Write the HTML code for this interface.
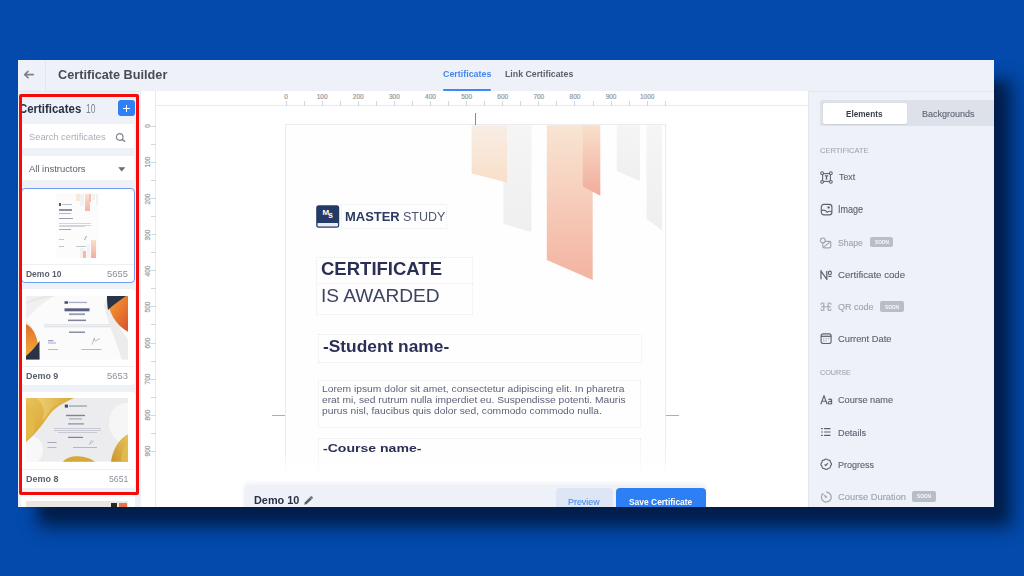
<!DOCTYPE html>
<html><head><meta charset="utf-8">
<style>
*{margin:0;padding:0;box-sizing:border-box}
html,body{width:1024px;height:576px;overflow:hidden}
body{background:#034aac;font-family:"Liberation Sans",sans-serif;position:relative}
.a{position:absolute}
.t{white-space:nowrap;transform-origin:0 0}
.full{left:0;top:0;width:1024px;height:576px}
.rn{font-size:6.5px;color:#959aa3;-webkit-text-stroke:0.2px currentColor;white-space:nowrap;line-height:8px;text-align:center;width:24px}
.rv{transform:rotate(-90deg)}
.tk{top:101.3px;width:1px;height:4.3px;background:#d3d6dc}
.tkv{left:151.3px;width:4.3px;height:1px;background:#d3d6dc}
.dash{border:1px dotted #e9eaee}
.md{-webkit-text-stroke:0.25px currentColor}
.soon{border-radius:2px;background:#b9bdc6}
</style></head><body>
<div class="a" style="left:38px;top:80px;width:974px;height:447px;background:#01204f;filter:blur(9px)"></div>
<div class="a" style="left:40px;top:84px;width:962px;height:434px;background:#011a45;filter:blur(5px);opacity:.45"></div>
<div class="a" style="left:18px;top:60px;width:976px;height:447px;background:#eef1f8"></div>

<div class="a" style="left:18px;top:90.5px;width:976px;height:1px;background:#e3e6ee"></div>
<svg class="a" style="left:22px;top:69px" width="14" height="12" viewBox="0 0 14 12"><path d="M11.3 5.6H3M6 2.4L2.7 5.6L6 8.8" stroke="#7b8089" stroke-width="1.6" fill="none" stroke-linecap="round" stroke-linejoin="round"/></svg>
<div class="a" style="left:44.7px;top:60px;width:1px;height:30.5px;background:#e3e6ee"></div>
<div class="a t" style="left:57.80px;top:67.93px;font-size:12.28px;line-height:14.73px;font-weight:bold;color:#474c57;transform:scaleX(1.035);">Certificate Builder</div>
<div class="a t" style="left:442.60px;top:69.22px;font-size:8.69px;line-height:10.43px;font-weight:bold;color:#3f87f2;transform:scaleX(1.025);">Certificates</div>
<div class="a t" style="left:504.60px;top:69.22px;font-size:8.69px;line-height:10.43px;font-weight:bold;color:#5a5f6a;transform:scaleX(1.012);">Link Certificates</div>
<div class="a" style="left:442.6px;top:88.8px;width:48.5px;height:2px;background:#3f87f2;border-radius:1px"></div>
<div class="a full" style="clip-path:inset(91px 884px 69px 18px)">
<div class="a" style="left:139.5px;top:91px;width:1.5px;height:416px;background:#e3e6ee"></div>
<div class="a t" style="left:19.30px;top:100.51px;font-size:13.04px;line-height:15.64px;font-weight:bold;color:#273044;transform:scaleX(0.877);">Certificates</div>
<div class="a t" style="left:86.30px;top:100.51px;font-size:13.04px;line-height:15.64px;font-weight:normal;color:#7d8290;transform:scaleX(0.652);">10</div>
<div class="a" style="left:118.2px;top:100.2px;width:16.5px;height:16.3px;border-radius:3px;background:#2f80f5"></div>
<div class="a" style="left:122.7px;top:107.6px;width:7.5px;height:1.6px;background:#fff"></div>
<div class="a" style="left:125.65px;top:104.6px;width:1.6px;height:7.5px;background:#fff"></div>
<div class="a" style="left:22px;top:124px;width:112px;height:23.5px;background:#fff;border-radius:2px"></div>
<div class="a t" style="left:29.40px;top:131.87px;font-size:9.38px;line-height:11.26px;font-weight:normal;color:#a9aeb8;transform:scaleX(0.993);">Search certificates</div>
<svg class="a" style="left:115px;top:133px" width="11" height="9" viewBox="0 0 11 9" overflow="visible"><circle cx="4.7" cy="4" r="3.3" stroke="#7f8590" stroke-width="1.2" fill="none"/><path d="M7.3 6.6L9.8 8.4" stroke="#7f8590" stroke-width="1.3" stroke-linecap="round"/></svg>
<div class="a" style="left:22px;top:155.8px;width:112px;height:24.7px;background:#fff;border-radius:2px"></div>
<div class="a t" style="left:29.40px;top:164.06px;font-size:8.55px;line-height:10.26px;font-weight:normal;color:#5b606b;transform:scaleX(1.103);">All instructors</div>
<svg class="a" style="left:117.5px;top:166.6px" width="8" height="5" viewBox="0 0 8 5"><path d="M0.2 0.2H7.3L3.75 4.4Z" fill="#676c76"/></svg>
<div class="a" style="left:20.5px;top:187.8px;width:114px;height:95.4px;background:#fff;border-radius:4px;border:1px solid #6c9ef2;"></div>
<div class="a" style="left:21.5px;top:264px;width:112px;height:1px;background:#eef0f4"></div>
<div class="a t" style="left:25.90px;top:269.05px;font-size:8.45px;line-height:10.14px;font-weight:bold;color:#5a5f6b;transform:scaleX(1.005);">Demo 10</div>
<div class="a t" style="left:106.70px;top:269.05px;font-size:8.45px;line-height:10.14px;font-weight:normal;color:#8b909a;transform:scaleX(1.111);">5655</div>
<div class="a" style="left:20.5px;top:289.2px;width:114px;height:96.3px;background:#fff;border-radius:4px;"></div>
<div class="a" style="left:21.5px;top:366.3px;width:112px;height:1px;background:#eef0f4"></div>
<div class="a t" style="left:25.90px;top:371.05px;font-size:8.45px;line-height:10.14px;font-weight:bold;color:#5a5f6b;transform:scaleX(1.061);">Demo 9</div>
<div class="a t" style="left:106.70px;top:371.05px;font-size:8.45px;line-height:10.14px;font-weight:normal;color:#8b909a;transform:scaleX(1.111);">5653</div>
<div class="a" style="left:20.5px;top:391.7px;width:114px;height:96px;background:#fff;border-radius:4px;"></div>
<div class="a" style="left:21.5px;top:469.2px;width:112px;height:1px;background:#eef0f4"></div>
<div class="a t" style="left:25.90px;top:473.51px;font-size:8.60px;line-height:10.32px;font-weight:bold;color:#5a5f6b;transform:scaleX(1.044);">Demo 8</div>
<div class="a t" style="left:108.90px;top:473.51px;font-size:8.60px;line-height:10.32px;font-weight:normal;color:#8b909a;transform:scaleX(1.009);">5651</div>
<div class="a" style="left:20.5px;top:494px;width:114px;height:96px;background:#fff;border-radius:4px"></div>
<div class="a" style="left:55.8px;top:193px;width:43.5px;height:65px;background:#fcfcfd;overflow:hidden;filter:blur(0.35px)">
<div class="a" style="left:20.5px;top:1px;width:4px;height:6.5px;background:#f8e9dc"></div>
<div class="a" style="left:24.5px;top:1px;width:3.5px;height:12px;background:#f3f3f3"></div>
<div class="a" style="left:29px;top:1px;width:5px;height:16.5px;background:linear-gradient(#f9e2cf,#f3b3a2)"></div>
<div class="a" style="left:33px;top:1px;width:2px;height:8px;background:#f4bfae"></div>
<div class="a" style="left:36.5px;top:1px;width:2.5px;height:6px;background:#f2f2f2"></div>
<div class="a" style="left:40px;top:1px;width:1.8px;height:11px;background:#f2f2f2"></div>
<div class="a" style="left:3px;top:10.2px;width:2.6px;height:2.4px;background:#4a5575"></div>
<div class="a" style="left:6.2px;top:10.8px;width:10.5px;height:1.2px;background:#b9bdcc"></div>
<div class="a" style="left:3px;top:16.2px;width:13.5px;height:1.5px;background:#8d91a6"></div>
<div class="a" style="left:3px;top:19.6px;width:12.5px;height:1px;background:#b4b7c4"></div>
<div class="a" style="left:3px;top:25px;width:14px;height:1.4px;background:#9a9eb0"></div>
<div class="a" style="left:3px;top:30px;width:32px;height:0.9px;background:#d3d5dd"></div>
<div class="a" style="left:3px;top:31.6px;width:32px;height:0.9px;background:#d3d5dd"></div>
<div class="a" style="left:3px;top:33.2px;width:26px;height:0.9px;background:#d3d5dd"></div>
<div class="a" style="left:3px;top:36.3px;width:12px;height:1.2px;background:#a5a9b8"></div>
<div class="a" style="left:3px;top:45.5px;width:5.5px;height:1px;background:#c2c5d0"></div>
<div class="a" style="left:29.5px;top:42.5px;width:4px;height:4px;border-left:1px solid #a0a4b0;transform:skewX(-25deg)"></div>
<div class="a" style="left:3px;top:52.5px;width:5px;height:1px;background:#c2c5d0"></div>
<div class="a" style="left:20px;top:52.5px;width:10px;height:1px;background:#c2c5d0"></div>
<div class="a" style="left:24px;top:55px;width:4px;height:10px;background:#f5f2ee"></div>
<div class="a" style="left:27px;top:58px;width:3.5px;height:7px;background:#f4b9a6"></div>
<div class="a" style="left:31px;top:51px;width:3px;height:14px;background:#f3f3f3"></div>
<div class="a" style="left:35px;top:47px;width:5px;height:18px;background:linear-gradient(#f9dfcb,#f2ae9c)"></div>
</div>
<svg class="a" style="left:25.8px;top:296.4px;filter:blur(0.3px)" width="102.7" height="63.5" viewBox="0 0 102.7 63.5">
<defs>
<linearGradient id="o1" x1="0" y1="0" x2="1" y2="1"><stop offset="0" stop-color="#f4a43a"/><stop offset="0.5" stop-color="#e87a2e"/><stop offset="1" stop-color="#d8502e"/></linearGradient>
<linearGradient id="o2" x1="0" y1="0" x2="0" y2="1"><stop offset="0" stop-color="#e0702c"/><stop offset="1" stop-color="#f4b23a"/></linearGradient>
<radialGradient id="gw" cx="0.2" cy="0.3" r="0.8"><stop offset="0.5" stop-color="#ffffff"/><stop offset="0.8" stop-color="#eeeeee"/><stop offset="1" stop-color="#f7f7f7"/></radialGradient>
</defs>
<rect width="102.7" height="63.5" fill="#fbfbfb"/>
<path d="M0 0H28C18 6 8 14 0 24Z" fill="#f0f0f0"/>
<path d="M0 8C10 4 20 2 30 0H18C10 2 4 4 0 6Z" fill="#e8e8e8"/>
<path d="M0 24C6 30 12 40 14 63.5H0Z" fill="#ececec"/>
<path d="M0 28C9 32 13.5 46 13.5 63.5H0Z" fill="url(#o2)"/>
<path d="M0 63.5H13.5V45C10 50 5 56 0 60Z" fill="#2b3346"/>
<path d="M81 0C84 12 92 30 102.7 45V63.5H96C90 46 82 26 78 10Z" fill="#ececec"/>
<path d="M81 0H102.7V36C90 30 82 16 81 0Z" fill="url(#o1)"/>
<path d="M81 0H100C94 4 87 9 82 14C81.3 9 81 4 81 0Z" fill="#2b3346"/>
<rect x="38.5" y="5.3" width="3.6" height="2.4" fill="#3f4a6a"/>
<rect x="43" y="5.8" width="18" height="1.3" fill="#a6abbd"/>
<rect x="38.5" y="12.3" width="25" height="3" fill="#5a6180"/>
<rect x="43" y="17.3" width="16" height="1.8" fill="#979cb2"/>
<rect x="42" y="23.6" width="18" height="1.5" fill="#7d8399"/>
<rect x="18" y="28.5" width="66" height="0.8" fill="#d2d4dc"/>
<rect x="18" y="30.4" width="66" height="0.8" fill="#d2d4dc"/>
<rect x="43" y="35.5" width="16" height="1.5" fill="#8a8fa4"/>
<rect x="22" y="44.4" width="5.5" height="0.8" fill="#5565a8"/>
<rect x="22" y="46.5" width="8" height="1" fill="#a6aabb"/>
<rect x="22" y="53" width="10" height="1" fill="#b8bcc8"/>
<rect x="55.5" y="53" width="20" height="1" fill="#b8bcc8"/>
<path d="M66 48.5C67 46 68 43 68.5 42C68 45 69 46 71 44L74 42.5" stroke="#8a8f9b" stroke-width="0.6" fill="none"/>
</svg>
<svg class="a" style="left:25.8px;top:398.4px;filter:blur(0.3px)" width="102.7" height="63.7" viewBox="0 0 102.7 63.7">
<defs>
<linearGradient id="y1" x1="0" y1="0" x2="1" y2="1"><stop offset="0" stop-color="#e9c25a"/><stop offset="0.6" stop-color="#d7a836"/><stop offset="1" stop-color="#c9982c"/></linearGradient>
<linearGradient id="y2" x1="0" y1="0" x2="1" y2="0"><stop offset="0" stop-color="#f0d27a"/><stop offset="1" stop-color="#d9aa3a"/></linearGradient>
<linearGradient id="y3" x1="1" y1="0" x2="0" y2="1"><stop offset="0" stop-color="#e8c45e"/><stop offset="1" stop-color="#c8962a"/></linearGradient>
</defs>
<rect width="102.7" height="63.7" fill="#ececee"/>
<ellipse cx="100" cy="25" rx="17" ry="20" fill="#f6f6f7"/>
<ellipse cx="4" cy="52" rx="13" ry="14" fill="#f8f8f9"/>
<path d="M0 0H48C40 4 30 8 24 16C18 24 12 34 0 44Z" fill="url(#y1)"/>
<path d="M10 0H46C38 3 30 6 26 10C22 14 20 20 16 22C20 14 18 6 10 0Z" fill="url(#y2)" opacity="0.85"/>
<path d="M0 6C6 12 10 20 9 30C8 36 4 40 0 42Z" fill="#e3b949"/>
<path d="M102.7 36C94 40 87 50 85 63.7H102.7Z" fill="url(#y3)"/>
<path d="M102.7 44C98 48 95 56 95 63.7H102.7Z" fill="#e4bd55" opacity="0.8"/>
<path d="M37 63.7C40 59 50 57 58 59C63 60 67 62 69 63.7Z" fill="#d6a838"/>
<rect x="38.8" y="6.6" width="3.2" height="3" fill="#3f4a6a"/>
<rect x="43" y="7.4" width="18" height="1.3" fill="#9aa0b4"/>
<rect x="40" y="16.8" width="19" height="1.4" fill="#7d8399"/>
<rect x="43" y="20.4" width="13" height="1" fill="#9aa0b0"/>
<rect x="42" y="25.3" width="16" height="1.2" fill="#868ca2"/>
<rect x="28" y="30" width="47" height="0.8" fill="#bfc2cc"/>
<rect x="28" y="32" width="47" height="0.8" fill="#bfc2cc"/>
<rect x="32" y="34" width="39" height="0.8" fill="#bfc2cc"/>
<rect x="42" y="38.8" width="15" height="1.2" fill="#7d8399"/>
<rect x="21.5" y="44" width="9" height="0.9" fill="#9aa0b4"/>
<rect x="21.5" y="49" width="9" height="0.9" fill="#aeb2be"/>
<rect x="47" y="49" width="24" height="0.9" fill="#aeb2be"/>
<path d="M63 47L66 42M64 46L68 43" stroke="#8ea2d6" stroke-width="0.6"/>
</svg>
<div class="a" style="left:25.5px;top:501px;width:102.7px;height:64px;background:#ebe7e3;overflow:hidden">
<div class="a" style="left:85px;top:1.5px;width:6.5px;height:6px;background:#2a2624"></div>
<div class="a" style="left:93px;top:1.5px;width:8.5px;height:6px;background:#e8734a"></div>
</div>
</div>
<div class="a" style="left:18.6px;top:94.4px;width:120.4px;height:400.6px;border:3.1px solid #f50a0a;border-radius:2px"></div>
<div class="a full" style="clip-path:inset(91px 215.5px 69px 141px)">
<div class="a" style="left:141px;top:91px;width:668px;height:416px;background:#fff"></div>
<div class="a" style="left:285.2px;top:124.3px;width:381px;height:400px;background:#fefefe;border:1px solid #ebebf0"></div>
<svg class="a" style="left:0;top:0" width="1024" height="576">
<defs>
<linearGradient id="g1" x1="0" y1="0" x2="0" y2="1"><stop offset="0" stop-color="#f8eee5"/><stop offset="1" stop-color="#f8dfc9"/></linearGradient>
<linearGradient id="gg" x1="0" y1="0" x2="0" y2="1"><stop offset="0" stop-color="#f5f5f5"/><stop offset="1" stop-color="#efefef"/></linearGradient>
<linearGradient id="g3" x1="0" y1="0" x2="0" y2="1"><stop offset="0" stop-color="#f8e5d2"/><stop offset="1" stop-color="#f4b3a1"/></linearGradient>
<linearGradient id="g4" x1="0" y1="0" x2="0" y2="1"><stop offset="0" stop-color="#f8e0cc"/><stop offset="1" stop-color="#f2ab9a"/></linearGradient>
</defs>
<path d="M503.4 125.3H531.5V232L503.4 223.8Z" fill="url(#gg)"/>
<path d="M471.6 125.3H507V182.5L471.6 173.4Z" fill="url(#g1)"/>
<path d="M546.8 125.3H592.7V279.9L546.8 260Z" fill="url(#g3)"/>
<path d="M582.8 125.3H600.3V195.7L582.8 186.5Z" fill="url(#g4)"/>
<path d="M616.8 125.3H639.9V180.9L616.8 171Z" fill="url(#gg)"/>
<path d="M646.5 125.3H662V230.4L646.5 218.8Z" fill="url(#gg)"/>
</svg>
<div class="a" style="left:474.5px;top:112.5px;width:1.1px;height:12.5px;background:#858a93"></div>
<div class="a" style="left:666px;top:414.5px;width:13px;height:1.2px;background:#a9aebb"></div>
<div class="a" style="left:272px;top:414.5px;width:13px;height:1.2px;background:#a9aebb"></div>
<div class="a dash" style="left:340.5px;top:204px;width:106.5px;height:24.7px"></div>
<svg class="a" style="left:316px;top:205.3px" width="23.5" height="23" viewBox="0 0 23.5 23">
<rect x="0.2" y="0.2" width="23" height="22.6" rx="2.5" fill="#253b66"/>
<rect x="1.5" y="17.9" width="20.5" height="3.5" rx="0.8" fill="#e8ebf1"/>
<text x="6.6" y="10.2" font-family="Liberation Sans" font-weight="bold" font-size="7.2" fill="#fff" transform="translate(6.6 0) scale(1.12 1) translate(-6.6 0)">M</text>
<text x="12.2" y="12.7" font-family="Liberation Sans" font-weight="bold" font-size="8.4" fill="#fff">s</text>
</svg>
<div class="a t" style="left:344.90px;top:209.89px;font-size:12.32px;line-height:14.79px;font-weight:bold;color:#2a3a60;transform:scaleX(1.052);">MASTER</div>
<div class="a t" style="left:403.00px;top:209.89px;font-size:12.32px;line-height:14.79px;font-weight:normal;color:#4b5570;transform:scaleX(1.015);">STUDY</div>
<div class="a dash" style="left:315.8px;top:256.7px;width:157.2px;height:27px"></div>
<div class="a dash" style="left:315.8px;top:283.2px;width:157.2px;height:32px"></div>
<div class="a t" style="left:320.80px;top:259.33px;font-size:17.77px;line-height:21.32px;font-weight:bold;color:#2b2f55;transform:scaleX(1.042);">CERTIFICATE</div>
<div class="a t" style="left:321.40px;top:286.43px;font-size:17.77px;line-height:21.32px;font-weight:normal;color:#3d4463;transform:scaleX(1.076);">IS AWARDED</div>
<div class="a dash" style="left:317.6px;top:334.2px;width:324px;height:28.6px"></div>
<div class="a t" style="left:323.00px;top:337.00px;font-size:15.90px;line-height:19.08px;font-weight:bold;color:#2b2f55;transform:scaleX(1.091);">-Student name-</div>
<div class="a dash" style="left:317.6px;top:380.3px;width:323px;height:47.7px"></div>
<div class="a t" style="left:322.30px;top:382.93px;font-size:9.74px;line-height:11.69px;font-weight:normal;color:#5d6278;transform:scaleX(1.055);">Lorem ipsum dolor sit amet, consectetur adipiscing elit. In pharetra</div>
<div class="a t" style="left:322.30px;top:394.03px;font-size:9.74px;line-height:11.69px;font-weight:normal;color:#5d6278;transform:scaleX(1.051);">erat mi, sed rutrum nulla imperdiet eu. Suspendisse potenti. Mauris</div>
<div class="a t" style="left:322.30px;top:405.50px;font-size:9.24px;line-height:11.09px;font-weight:normal;color:#5d6278;transform:scaleX(1.108);">purus nisl, faucibus quis dolor sed, commodo commodo nulla.</div>
<div class="a dash" style="left:318.3px;top:437.9px;width:323px;height:40px"></div>
<div class="a t" style="left:322.70px;top:441.43px;font-size:11.75px;line-height:14.1px;font-weight:bold;color:#2b2f55;transform:scaleX(1.196);">-Course name-</div>
<div class="a" style="left:141px;top:452px;width:668px;height:55px;background:linear-gradient(rgba(255,255,255,0),#fff 40%)"></div>
<div class="a" style="left:141px;top:91px;width:668px;height:14.5px;background:#fff"></div>
<div class="a" style="left:141px;top:105.3px;width:668px;height:1px;background:#e8eaef"></div>
<div class="a" style="left:141px;top:91px;width:14.5px;height:416px;background:#fff"></div>
<div class="a" style="left:155px;top:91px;width:1px;height:416px;background:#e8eaef"></div>
<div class="a rn" style="left:274.00px;top:93.2px">0</div>
<div class="a tk" style="left:285.50px"></div>
<div class="a tk" style="left:303.56px"></div>
<div class="a rn" style="left:310.12px;top:93.2px">100</div>
<div class="a tk" style="left:321.62px"></div>
<div class="a tk" style="left:339.68px"></div>
<div class="a rn" style="left:346.24px;top:93.2px">200</div>
<div class="a tk" style="left:357.74px"></div>
<div class="a tk" style="left:375.80px"></div>
<div class="a rn" style="left:382.36px;top:93.2px">300</div>
<div class="a tk" style="left:393.86px"></div>
<div class="a tk" style="left:411.92px"></div>
<div class="a rn" style="left:418.48px;top:93.2px">400</div>
<div class="a tk" style="left:429.98px"></div>
<div class="a tk" style="left:448.04px"></div>
<div class="a rn" style="left:454.60px;top:93.2px">500</div>
<div class="a tk" style="left:466.10px"></div>
<div class="a tk" style="left:484.16px"></div>
<div class="a rn" style="left:490.72px;top:93.2px">600</div>
<div class="a tk" style="left:502.22px"></div>
<div class="a tk" style="left:520.28px"></div>
<div class="a rn" style="left:526.84px;top:93.2px">700</div>
<div class="a tk" style="left:538.34px"></div>
<div class="a tk" style="left:556.40px"></div>
<div class="a rn" style="left:562.96px;top:93.2px">800</div>
<div class="a tk" style="left:574.46px"></div>
<div class="a tk" style="left:592.52px"></div>
<div class="a rn" style="left:599.08px;top:93.2px">900</div>
<div class="a tk" style="left:610.58px"></div>
<div class="a tk" style="left:628.64px"></div>
<div class="a rn" style="left:635.20px;top:93.2px">1000</div>
<div class="a tk" style="left:646.70px"></div>
<div class="a tk" style="left:664.76px"></div>
<div class="a rn rv" style="left:136px;top:122.30px">0</div>
<div class="a tkv" style="top:125.80px"></div>
<div class="a tkv" style="top:143.86px"></div>
<div class="a rn rv" style="left:136px;top:158.42px">100</div>
<div class="a tkv" style="top:161.92px"></div>
<div class="a tkv" style="top:179.98px"></div>
<div class="a rn rv" style="left:136px;top:194.54px">200</div>
<div class="a tkv" style="top:198.04px"></div>
<div class="a tkv" style="top:216.10px"></div>
<div class="a rn rv" style="left:136px;top:230.66px">300</div>
<div class="a tkv" style="top:234.16px"></div>
<div class="a tkv" style="top:252.22px"></div>
<div class="a rn rv" style="left:136px;top:266.78px">400</div>
<div class="a tkv" style="top:270.28px"></div>
<div class="a tkv" style="top:288.34px"></div>
<div class="a rn rv" style="left:136px;top:302.90px">500</div>
<div class="a tkv" style="top:306.40px"></div>
<div class="a tkv" style="top:324.46px"></div>
<div class="a rn rv" style="left:136px;top:339.02px">600</div>
<div class="a tkv" style="top:342.52px"></div>
<div class="a tkv" style="top:360.58px"></div>
<div class="a rn rv" style="left:136px;top:375.14px">700</div>
<div class="a tkv" style="top:378.64px"></div>
<div class="a tkv" style="top:396.70px"></div>
<div class="a rn rv" style="left:136px;top:411.26px">800</div>
<div class="a tkv" style="top:414.76px"></div>
<div class="a tkv" style="top:432.82px"></div>
<div class="a rn rv" style="left:136px;top:447.38px">900</div>
<div class="a tkv" style="top:450.88px"></div>
<div class="a" style="left:244.4px;top:485px;width:462px;height:40px;background:#eef1f8;border-radius:5px;box-shadow:0 -2px 4px rgba(230,233,240,.6)"></div>
<div class="a t" style="left:253.80px;top:494.32px;font-size:11.34px;line-height:13.6px;font-weight:bold;color:#273044;transform:scaleX(0.959);">Demo 10</div>
<svg class="a" style="left:303px;top:495px" width="11" height="11" viewBox="0 0 11 11"><path d="M1.3 9.7L1.9 7.2L7.6 1.5Q8.3 0.9 9 1.5L9.5 2Q10.1 2.7 9.5 3.4L3.8 9.1Z" fill="#5b616c"/><path d="M6.9 2.3L8.7 4.1" stroke="#eef1f8" stroke-width="0.6"/></svg>
<div class="a" style="left:555.5px;top:488.2px;width:57.5px;height:30px;background:#dee5f4;border-radius:4px"></div>
<div class="a t" style="left:568.40px;top:495.57px;font-size:9.80px;line-height:11.76px;font-weight:normal;color:#4a8bef;transform:scaleX(0.906);-webkit-text-stroke:0.12px currentColor;">Preview</div>
<div class="a" style="left:616px;top:488px;width:89.5px;height:30px;background:#2e7ef4;border-radius:4px"></div>
<div class="a t" style="left:628.90px;top:495.76px;font-size:9.60px;line-height:11.52px;font-weight:bold;color:#ffffff;transform:scaleX(0.879);">Save Certificate</div>
</div>
<div class="a full" style="clip-path:inset(91px 30px 69px 808px)">
<div class="a" style="left:808.3px;top:91px;width:1px;height:416px;background:#e3e6ee"></div>
<div class="a" style="left:819.5px;top:100.2px;width:190px;height:26px;background:#dde1ea;border-radius:3px"></div>
<div class="a" style="left:822.5px;top:102.7px;width:84px;height:21px;background:#fff;border-radius:2.5px;box-shadow:0 0.5px 1px rgba(0,0,0,.08)"></div>
<div class="a t" style="left:846.30px;top:108.41px;font-size:9.45px;line-height:11.34px;font-weight:bold;color:#3a3f4a;transform:scaleX(0.869);">Elements</div>
<div class="a t" style="left:922.20px;top:108.41px;font-size:9.45px;line-height:11.34px;font-weight:normal;color:#5f6470;transform:scaleX(0.954);-webkit-text-stroke:0.12px currentColor;">Backgrounds</div>
<div class="a t" style="left:819.90px;top:145.96px;font-size:8.02px;line-height:9.63px;font-weight:normal;color:#a2a7b1;transform:scaleX(0.937);-webkit-text-stroke:0.12px currentColor;">CERTIFICATE</div>
<div class="a t" style="left:819.90px;top:367.76px;font-size:8.02px;line-height:9.63px;font-weight:normal;color:#a2a7b1;transform:scaleX(0.900);-webkit-text-stroke:0.12px currentColor;">COURSE</div>
<div class="a t" style="left:838.90px;top:172.35px;font-size:9.30px;line-height:11.16px;font-weight:normal;color:#5e6370;transform:scaleX(0.944);-webkit-text-stroke:0.12px currentColor;">Text</div>
<div class="a t" style="left:837.90px;top:204.40px;font-size:10.25px;line-height:12.3px;font-weight:normal;color:#5e6370;transform:scaleX(0.881);-webkit-text-stroke:0.12px currentColor;">Image</div>
<div class="a t" style="left:838.20px;top:237.68px;font-size:8.74px;line-height:10.49px;font-weight:normal;color:#9da2ac;transform:scaleX(0.981);-webkit-text-stroke:0.12px currentColor;">Shape</div>
<div class="a t" style="left:838.00px;top:268.96px;font-size:9.60px;line-height:11.52px;font-weight:normal;color:#5e6370;transform:scaleX(1.006);-webkit-text-stroke:0.12px currentColor;">Certificate code</div>
<div class="a t" style="left:838.00px;top:301.64px;font-size:9.31px;line-height:11.17px;font-weight:normal;color:#9da2ac;transform:scaleX(0.969);-webkit-text-stroke:0.12px currentColor;">QR code</div>
<div class="a t" style="left:838.00px;top:334.04px;font-size:9.31px;line-height:11.17px;font-weight:normal;color:#5e6370;transform:scaleX(1.005);-webkit-text-stroke:0.12px currentColor;">Current Date</div>
<div class="a t" style="left:837.90px;top:395.38px;font-size:8.74px;line-height:10.49px;font-weight:normal;color:#5e6370;transform:scaleX(1.050);-webkit-text-stroke:0.12px currentColor;">Course name</div>
<div class="a t" style="left:838.00px;top:426.64px;font-size:9.52px;line-height:11.42px;font-weight:normal;color:#5e6370;transform:scaleX(0.966);-webkit-text-stroke:0.12px currentColor;">Details</div>
<div class="a t" style="left:837.90px;top:459.07px;font-size:9.59px;line-height:11.51px;font-weight:normal;color:#5e6370;transform:scaleX(0.940);-webkit-text-stroke:0.12px currentColor;">Progress</div>
<div class="a t" style="left:838.10px;top:491.20px;font-size:9.46px;line-height:11.35px;font-weight:normal;color:#9da2ac;transform:scaleX(0.989);-webkit-text-stroke:0.12px currentColor;">Course Duration</div>
<div class="a soon" style="left:870.1px;top:237px;width:22.8px;height:10.2px"></div>
<div class="a t" style="left:874.50px;top:239.20px;font-size:5.44px;line-height:6.53px;font-weight:bold;color:#f7f8fa;transform:scaleX(0.873);">SOON</div>
<div class="a soon" style="left:880.3px;top:301.4px;width:23.4px;height:10.2px"></div>
<div class="a t" style="left:885.00px;top:303.60px;font-size:5.44px;line-height:6.53px;font-weight:bold;color:#f7f8fa;transform:scaleX(0.873);">SOON</div>
<div class="a soon" style="left:912.1px;top:490.9px;width:23.5px;height:10.9px"></div>
<div class="a t" style="left:916.85px;top:493.45px;font-size:5.44px;line-height:6.53px;font-weight:bold;color:#f7f8fa;transform:scaleX(0.873);">SOON</div>
<svg class="a" style="left:819.6px;top:171.4px" width="13" height="13" viewBox="0 0 14 14" stroke="#5d636e" stroke-width="1.15" fill="none">
<rect x="2.8" y="2.8" width="8.4" height="8.4"/>
<circle cx="2.3" cy="2.3" r="1.5" fill="#eef1f8"/><circle cx="11.7" cy="2.3" r="1.5" fill="#eef1f8"/>
<circle cx="2.3" cy="11.7" r="1.5" fill="#eef1f8"/><circle cx="11.7" cy="11.7" r="1.5" fill="#eef1f8"/>
<path d="M5.2 5.2H8.8M7 5.2V8.6M6 8.6H8" stroke-width="1.2"/>
</svg>
<svg class="a" style="left:819.8px;top:203.3px" width="13" height="13" viewBox="0 0 13 13" stroke="#5d636e" stroke-width="1.15" fill="none">
<rect x="1.3" y="1.3" width="10.6" height="10.6" rx="2.6"/>
<path d="M1.3 7.6C3.5 6.6 6 7.2 7.6 9.8M7.2 9.3C8.6 8.3 10.4 8 11.9 8.6"/>
<circle cx="8.6" cy="4.4" r="1.2" fill="#5d636e" stroke="none"/>
</svg>
<svg class="a" style="left:819.3px;top:236.5px" width="13" height="12" viewBox="0 0 13 12" stroke="#a0a5ae" stroke-width="1.15" fill="none">
<circle cx="3.8" cy="3.4" r="2.4"/>
<path d="M6.3 4.3H10.4Q11.8 4.3 11.8 5.7V9.4Q11.8 10.8 10.4 10.8H5.2Q3.8 10.8 3.8 9.4V6"/>
<path d="M4.3 10.4L11.4 4.6"/>
</svg>
<svg class="a" style="left:820px;top:269.5px" width="13" height="10" viewBox="0 0 13 10" stroke="#5d636e" stroke-width="1.15" fill="none">
<path d="M1 9.3V1L6.8 9.3V1" stroke-width="1.25"/>
<ellipse cx="9.9" cy="2.9" rx="1.5" ry="1.8" stroke-width="1.1"/>
<path d="M8.2 6.4H11.6" stroke-width="1.1"/>
</svg>
<svg class="a" style="left:820.3px;top:302px" width="12" height="9.5" viewBox="0 0 12 9.5" stroke="#a0a5ae" stroke-width="1.15" fill="none">
<path d="M3.4 1H2.2Q1 1 1 2.2V2.8M8.6 1H9.8Q11 1 11 2.2V2.8M1 6.7V7.3Q1 8.5 2.2 8.5H3.4M11 6.7V7.3Q11 8.5 9.8 8.5H8.6"/>
<path d="M3.8 0.8V8.7M8.2 0.8V8.7M1 4.75H11"/>
</svg>
<svg class="a" style="left:820px;top:333px" width="12" height="11" viewBox="0 0 12 11" stroke="#5d636e" stroke-width="1.15" fill="none">
<rect x="1.1" y="0.9" width="10" height="9.6" rx="2"/>
<path d="M1.1 3.3H11.1" stroke-width="1.3"/>
<g fill="#8a8f99" stroke="none"><rect x="3.3" y="5.2" width="1" height="1"/><rect x="5.6" y="5.2" width="1" height="1"/><rect x="7.9" y="5.2" width="1" height="1"/><rect x="3.3" y="7.4" width="1" height="1"/><rect x="5.6" y="7.4" width="1" height="1"/></g>
</svg>
<svg class="a" style="left:819.5px;top:394.8px" width="13" height="10" viewBox="0 0 13 10" stroke="#5d636e" stroke-width="1.15" fill="none">
<path d="M0.8 9.2L4 0.8L7.2 9.2M2 6.2H6"/>
<path d="M8.4 4.6C9 4 11 3.9 11.6 4.9V9.2M11.6 6.6C10.2 6.2 8.2 6.4 8.2 7.9C8.2 9.4 10.8 9.2 11.6 8"/>
</svg>
<svg class="a" style="left:820px;top:427px" width="12" height="10" viewBox="0 0 12 10" stroke="#5d636e" stroke-width="1.15" fill="none">
<path d="M4.1 1.6H10.5M4.1 5H10.5M4.1 8.4H10.5"/>
<path d="M1 1.6H2.8M1 5H2.8M1 8.4H2.8" stroke-width="1.1"/>
</svg>
<svg class="a" style="left:819.6px;top:457.6px" width="12.5" height="12.5" viewBox="0 0 12.5 12.5" stroke="#5d636e" stroke-width="1.15" fill="none">
<path d="M6.2 1Q6.9 1 7.5 1.6Q8.1 2.1 8.9 2.1Q10.2 2.2 10.3 3.4Q10.4 4.3 10.9 4.8Q11.6 5.5 11.5 6.2Q11.4 6.9 10.9 7.4Q10.4 8 10.4 8.8Q10.3 10.2 9 10.3Q8.2 10.4 7.6 10.9Q6.9 11.5 6.2 11.5Q5.5 11.5 4.9 10.9Q4.3 10.4 3.5 10.4Q2.2 10.3 2.1 9Q2 8.2 1.5 7.6Q0.9 6.9 0.9 6.2Q0.9 5.5 1.5 4.9Q2 4.3 2.1 3.5Q2.2 2.2 3.5 2.1Q4.3 2 4.9 1.5Q5.5 1 6.2 1Z"/>
<path d="M4.6 6.5L5.8 7.5L7.9 5.2"/>
</svg>
<svg class="a" style="left:819.8px;top:490.8px" width="12.5" height="12" viewBox="0 0 12.5 12" stroke="#a0a5ae" stroke-width="1.15" fill="none">
<path d="M3.2 2.3A4.9 4.9 0 1 0 6.2 1.2" stroke-width="1.25"/>
<path d="M3.6 3.6L7.1 5.9L5.9 7.1Z" fill="#a0a5ae" stroke-width="0.6" stroke-linejoin="round"/>
</svg>
</div>
</body></html>
